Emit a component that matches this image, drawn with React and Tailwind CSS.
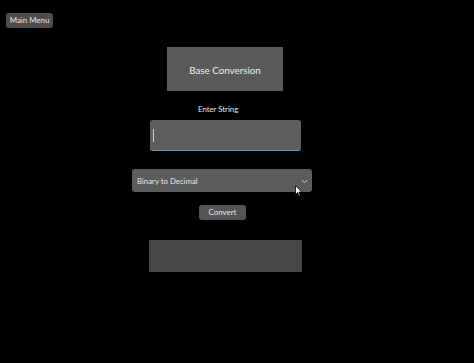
export default function App() {
  return (
    <div
      className="relative w-[474px] h-[363px] bg-black overflow-hidden flex flex-col items-start"
      style={{ fontFamily: 'Lato, "Open Sans", sans-serif' }}
    >
      <button className="ml-[6px] mt-[13px] w-[47px] h-[15px] rounded-[3px] bg-[#4d4d4d] text-[#e6e6e6] text-[7.9px] leading-none flex items-center justify-center">
        Main Menu
      </button>
      <div className="ml-[167px] mt-[19px] w-[116px] h-[44px] bg-[#5a5a5a] text-[#ececec] text-[9.8px] pt-[2px] flex items-center justify-center">
        Base Conversion
      </div>
      <div className="ml-[198px] mt-[12px] h-[13px] text-[7.8px] leading-[13px] text-[#e8e8e8]">
        Enter String
      </div>
      <div className="ml-[150px] mt-[4px] w-[151px] h-[31px] rounded-[3px] bg-[#5e5e5e] border-b border-[#6d93ad] flex items-center">
        <div className="ml-[3px] w-[1px] h-[13px] bg-[#d0d0d0]" />
      </div>
      <div className="ml-[132px] mt-[18px] w-[180px] h-[23px] rounded-[3px] bg-[#5c5c5c] flex items-center justify-between pl-[5px] pr-[4px] pt-[2px]">
        <span className="text-[7.8px] text-[#e6e6e6]">Binary to Decimal</span>
        <svg width="7" height="5" viewBox="0 0 7 5" fill="none">
          <path d="M0.8 1 L3.5 3.7 L6.2 1" stroke="#d8d8d8" strokeWidth="0.9" />
        </svg>
      </div>
      <button className="ml-[199px] mt-[13px] w-[47px] h-[15px] rounded-[3px] bg-[#555555] text-[#e6e6e6] text-[7.9px] leading-none flex items-center justify-center">
        Convert
      </button>
      <div className="ml-[149px] mt-[20px] w-[153px] h-[32px] bg-[#474747]" />
      <svg
        className="absolute left-[295px] top-[185px]"
        width="8"
        height="12"
        viewBox="0 0 8 12"
      >
        <path d="M0.5 0.5 L0.5 9.5 L2.6 7.6 L4 10.9 L5.3 10.3 L3.9 7.1 L6.8 7.1 Z" fill="#ffffff" stroke="#000000" strokeWidth="0.8" />
      </svg>
    </div>
  );
}
